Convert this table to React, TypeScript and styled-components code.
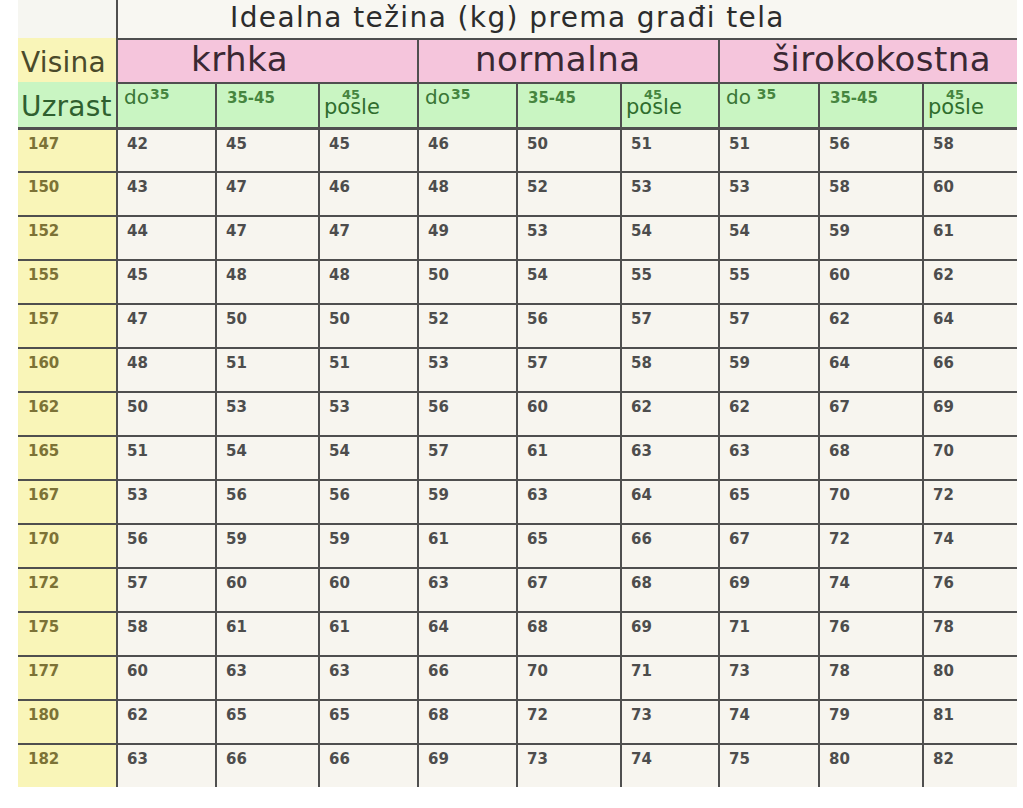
import styled, { createGlobalStyle } from "styled-components";

const GlobalStyle = createGlobalStyle`
  html, body {
    margin: 0;
    padding: 0;
    background: #ffffff;
  }
  body {
    font-family: "DejaVu Sans", Verdana, sans-serif;
  }
`;

const LINE = "#4f4f4f";

const Page = styled.div`
  padding-left: 18px;
  width: 1023px;
  height: 808px;
  box-sizing: border-box;
  overflow: hidden;
`;

const Table = styled.div`
  display: grid;
  grid-template-columns: 98px 99px 103px 99px 99px 104px 98px 100px 104px 95px;
  grid-template-rows: 38px 44px 45px repeat(15, 44px);
`;

const Corner = styled.div`
  background: #f6f6f1;
`;

const TitleCell = styled.div`
  grid-column: 2 / span 9;
  background: #f8f7f2;
  border-left: 2px solid ${LINE};
  font-size: 28px;
  color: #2c2c2c;
  display: flex;
  align-items: flex-start;
  padding-left: 112px;
  line-height: 38px;
  margin-top: -1px;
  letter-spacing: 1.4px;
  white-space: nowrap;
`;

const SideHead = styled.div<{ $bg: string; $color: string }>`
  background: ${(p) => p.$bg};
  color: ${(p) => p.$color};
  font-size: 28px;
  display: flex;
  align-items: center;
  padding: 4px 0 0 3px;
  box-sizing: border-box;
  letter-spacing: 0.2px;
`;

const GroupCell = styled.div<{ $indent: number }>`
  grid-column: span 3;
  background: #f5c5dc;
  border-left: 2px solid ${LINE};
  border-top: 2px solid ${LINE};
  font-size: 34px;
  color: #3a2833;
  display: flex;
  align-items: center;
  padding: 0 0 4px ${(p) => p.$indent}px;
  box-sizing: border-box;
  letter-spacing: 0.5px;
`;

const SubCell = styled.div`
  background: #c9f5c2;
  border-left: 2px solid ${LINE};
  border-top: 2px solid ${LINE};
  color: #3f7d3b;
  position: relative;
  box-sizing: border-box;
  padding: 2px 0 0 6px;
`;

const Big = styled.span`
  font-size: 20px;
  line-height: 22px;
  color: #3a7636;
`;

const Small = styled.span`
  font-size: 14px;
  font-weight: bold;
  vertical-align: top;
  line-height: 16px;
  margin-left: 1px;
  color: #46853f;
`;

const Range = styled.span`
  display: block;
  padding: 3px 0 0 4px;
  font-size: 15px;
  font-weight: bold;
  color: #46853f;
`;

const Posle = styled.span`
  position: absolute;
  left: 4px;
  top: 11px;
  font-size: 21px;
  color: #2f6d2d;
`;

const PosleNum = styled.span`
  position: absolute;
  left: 22px;
  top: 3px;
  font-size: 13px;
  font-weight: bold;
  color: #46853f;
`;

const AgeCell = styled.div<{ $first?: boolean }>`
  background: #f9f5b8;
  border-top: ${(p) => (p.$first ? 3 : 2)}px solid ${LINE};
  color: #7c7236;
  font-size: 15px;
  font-weight: bold;
  padding: 5px 0 0 10px;
  box-sizing: border-box;
`;

const DataCell = styled.div<{ $first?: boolean }>`
  background: #f7f5ef;
  border-left: 2px solid ${LINE};
  border-top: ${(p) => (p.$first ? 3 : 2)}px solid ${LINE};
  color: #4d4d4d;
  font-size: 15px;
  font-weight: bold;
  padding: 5px 0 0 9px;
  box-sizing: border-box;
`;

const rows: [number, number[]][] = [
  [147, [42, 45, 45, 46, 50, 51, 51, 56, 58]],
  [150, [43, 47, 46, 48, 52, 53, 53, 58, 60]],
  [152, [44, 47, 47, 49, 53, 54, 54, 59, 61]],
  [155, [45, 48, 48, 50, 54, 55, 55, 60, 62]],
  [157, [47, 50, 50, 52, 56, 57, 57, 62, 64]],
  [160, [48, 51, 51, 53, 57, 58, 59, 64, 66]],
  [162, [50, 53, 53, 56, 60, 62, 62, 67, 69]],
  [165, [51, 54, 54, 57, 61, 63, 63, 68, 70]],
  [167, [53, 56, 56, 59, 63, 64, 65, 70, 72]],
  [170, [56, 59, 59, 61, 65, 66, 67, 72, 74]],
  [172, [57, 60, 60, 63, 67, 68, 69, 74, 76]],
  [175, [58, 61, 61, 64, 68, 69, 71, 76, 78]],
  [177, [60, 63, 63, 66, 70, 71, 73, 78, 80]],
  [180, [62, 65, 65, 68, 72, 73, 74, 79, 81]],
  [182, [63, 66, 66, 69, 73, 74, 75, 80, 82]],
];

const groups: [string, number][] = [
  ["krhka", 73],
  ["normalna", 56],
  ["širokokostna", 52],
];

function SubHeaders({ spaced }: { spaced?: boolean }) {
  return (
    <>
      <SubCell>
        <Big>do</Big>
        <Small>{spaced ? " 35" : "35"}</Small>
      </SubCell>
      <SubCell>
        <Range>35-45</Range>
      </SubCell>
      <SubCell>
        <PosleNum>45</PosleNum>
        <Posle>posle</Posle>
      </SubCell>
    </>
  );
}

function Row({ height, vals, first }: { height: number; vals: number[]; first: boolean }) {
  return (
    <>
      <AgeCell $first={first}>{height}</AgeCell>
      {vals.map((v, j) => (
        <DataCell key={j} $first={first}>
          {v}
        </DataCell>
      ))}
    </>
  );
}

export default function App() {
  return (
    <Page>
      <GlobalStyle />
      <Table>
        <Corner />
        <TitleCell>Idealna težina (kg) prema građi tela</TitleCell>

        <SideHead $bg="#f9f5b8" $color="#4a4a2a">Visina</SideHead>
        {groups.map(([g, indent]) => (
          <GroupCell key={g} $indent={indent}>
            {g}
          </GroupCell>
        ))}

        <SideHead $bg="#c9f5c2" $color="#2f5f2f">Uzrast</SideHead>
        <SubHeaders />
        <SubHeaders />
        <SubHeaders spaced />

        {rows.map(([h, vals], i) => (
          <Row key={h} height={h} vals={vals} first={i === 0} />
        ))}
      </Table>
    </Page>
  );
}
